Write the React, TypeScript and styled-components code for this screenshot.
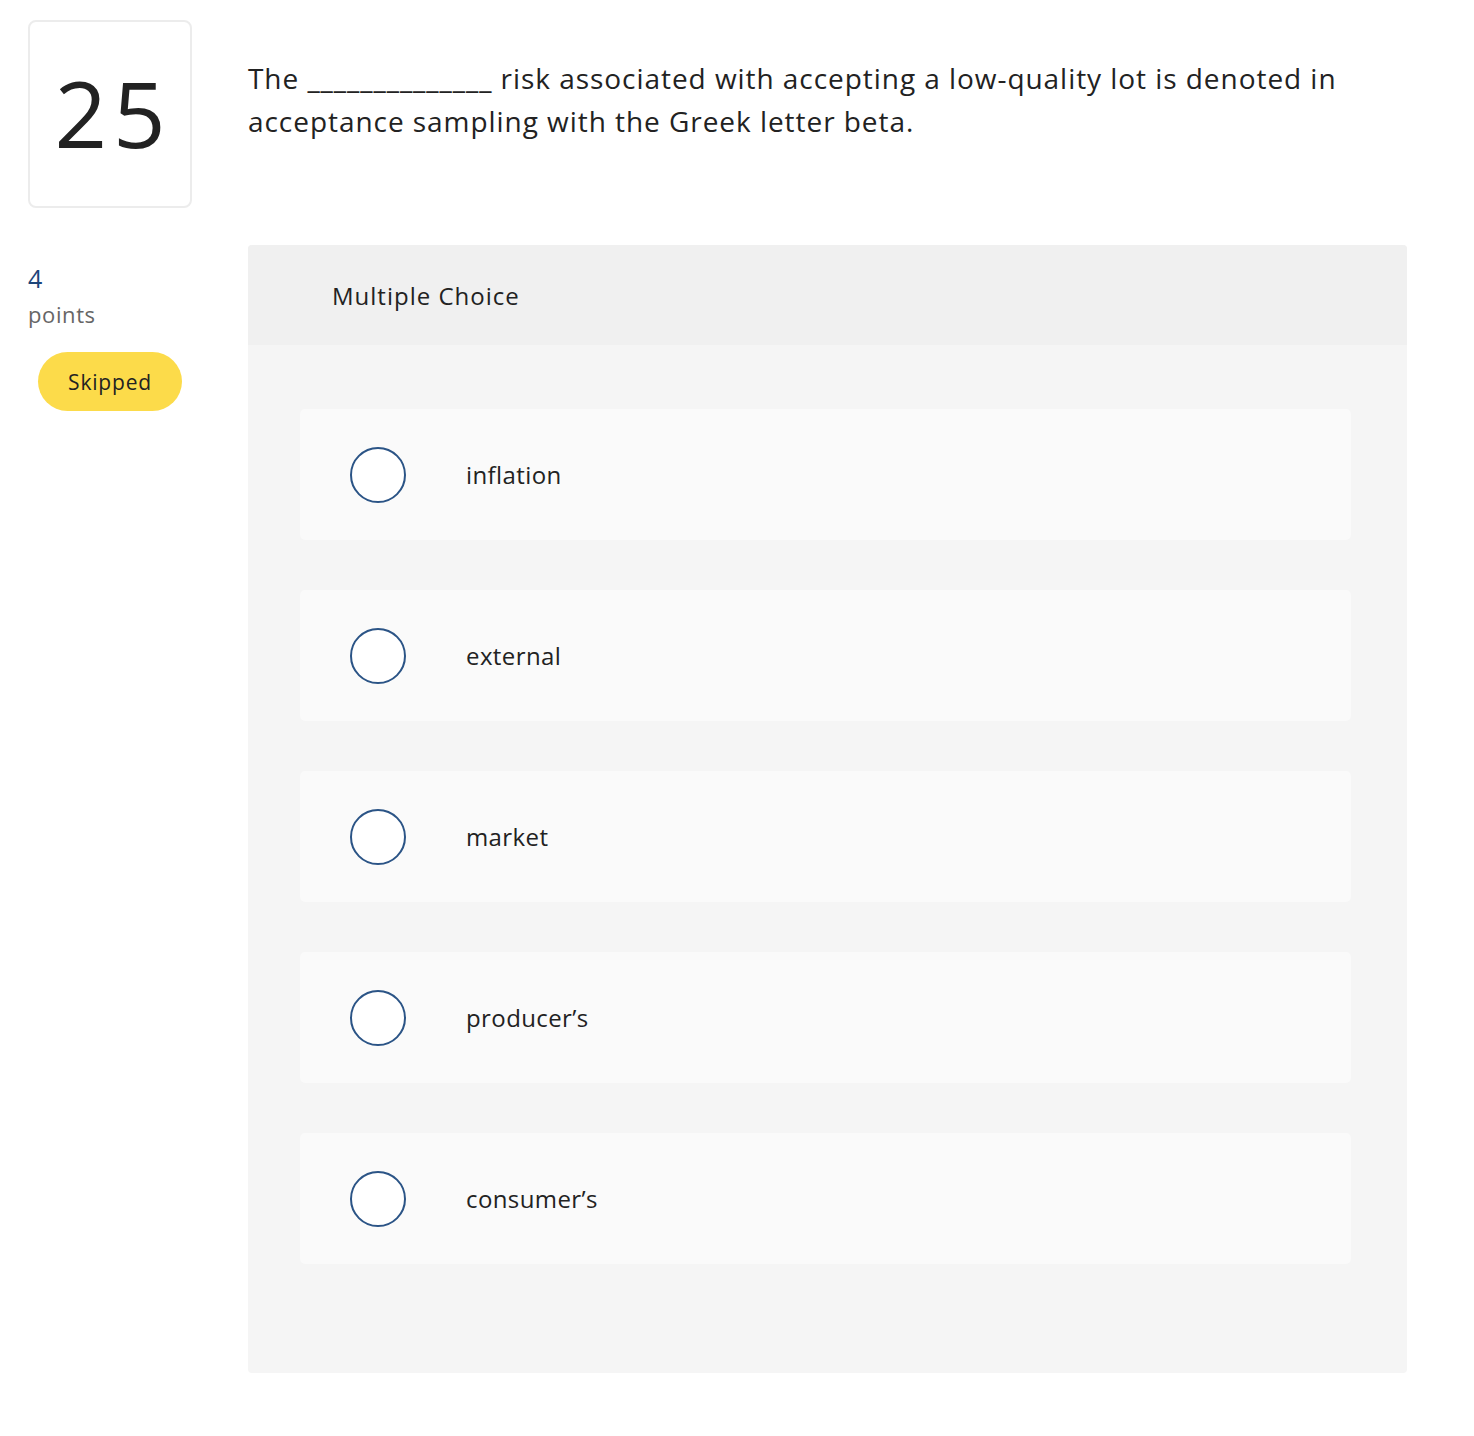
import * as React from 'react'
import styled, { createGlobalStyle } from 'styled-components'

const GlobalStyle = createGlobalStyle`
  html, body {
    margin: 0;
    padding: 0;
    background: #ffffff;
  }
  body {
    font-family: "Open Sans", Lato, "Liberation Sans", sans-serif;
    color: #222222;
  }
`

const options = ['inflation', 'external', 'market', 'producer’s', 'consumer’s']

export default function App() {
  return (
    <>
      <GlobalStyle />
      <Page>
        <Side>
          <NumberBox>25</NumberBox>
          <Points>
            <PointsValue>4</PointsValue>
            <PointsLabel>points</PointsLabel>
          </Points>
          <StatusPill>Skipped</StatusPill>
        </Side>
        <Main>
          <Prompt>
            The ______________ risk associated with accepting a low-quality lot is denoted in
            acceptance sampling with the Greek letter beta.
          </Prompt>
          <Panel>
            <PanelHeader>Multiple Choice</PanelHeader>
            <OptionList>
              {options.map((o) => (
                <Option key={o}>
                  <Radio />
                  <OptionText>{o}</OptionText>
                </Option>
              ))}
            </OptionList>
          </Panel>
        </Main>
      </Page>
    </>
  )
}

const Page = styled.div`
  display: flex;
  padding: 20px 0 0 28px;
  gap: 56px;
`

const Side = styled.div`
  width: 164px;
  display: flex;
  flex-direction: column;
`

const NumberBox = styled.div`
  box-sizing: border-box;
  width: 164px;
  height: 188px;
  border: 2px solid #ececec;
  border-radius: 8px;
  display: flex;
  align-items: center;
  justify-content: center;
  font-size: 92px;
  letter-spacing: 6px;
  color: #222222;
  padding: 0 0 4px 6px;
`

const Points = styled.div`
  margin-top: 52px;
  display: flex;
  flex-direction: column;
`

const PointsValue = styled.span`
  font-size: 25px;
  line-height: 36px;
  font-weight: 500;
  color: #1d457a;
`

const PointsLabel = styled.span`
  font-size: 22px;
  line-height: 36px;
  letter-spacing: 0.6px;
  color: #666666;
`

const StatusPill = styled.div`
  margin: 20px 0 0 10px;
  width: 144px;
  height: 59px;
  border-radius: 30px;
  background: #fcdb4a;
  display: flex;
  align-items: center;
  justify-content: center;
  font-size: 21px;
  letter-spacing: 0.8px;
  color: #222222;
`

const Main = styled.div`
  width: 1159px;
  display: flex;
  flex-direction: column;
`

const Prompt = styled.p`
  margin: 37px 0 0;
  font-size: 28px;
  line-height: 43px;
  letter-spacing: 0.95px;
  color: #222222;
  height: 188px;
  padding-right: 50px;
`

const Panel = styled.div`
  background: #f5f5f5;
  border-radius: 4px;
  overflow: hidden;
  margin-bottom: 62px;
`

const PanelHeader = styled.div`
  height: 100px;
  background: #f0f0f0;
  display: flex;
  align-items: center;
  padding-left: 84px;
  font-size: 24px;
  letter-spacing: 1px;
  color: #222222;
`

const OptionList = styled.div`
  padding: 64px 56px 109px 52px;
  display: flex;
  flex-direction: column;
  gap: 50px;
`

const Option = styled.div`
  height: 131px;
  background: #fafafa;
  border-radius: 5px;
  display: flex;
  align-items: center;
  padding-left: 50px;
`

const Radio = styled.span`
  box-sizing: border-box;
  width: 56px;
  height: 56px;
  border-radius: 50%;
  border: 2px solid #2b5486;
  background: #ffffff;
  flex-shrink: 0;
`

const OptionText = styled.span`
  margin-left: 60px;
  font-size: 24px;
  letter-spacing: 0.4px;
  color: #222222;
`
